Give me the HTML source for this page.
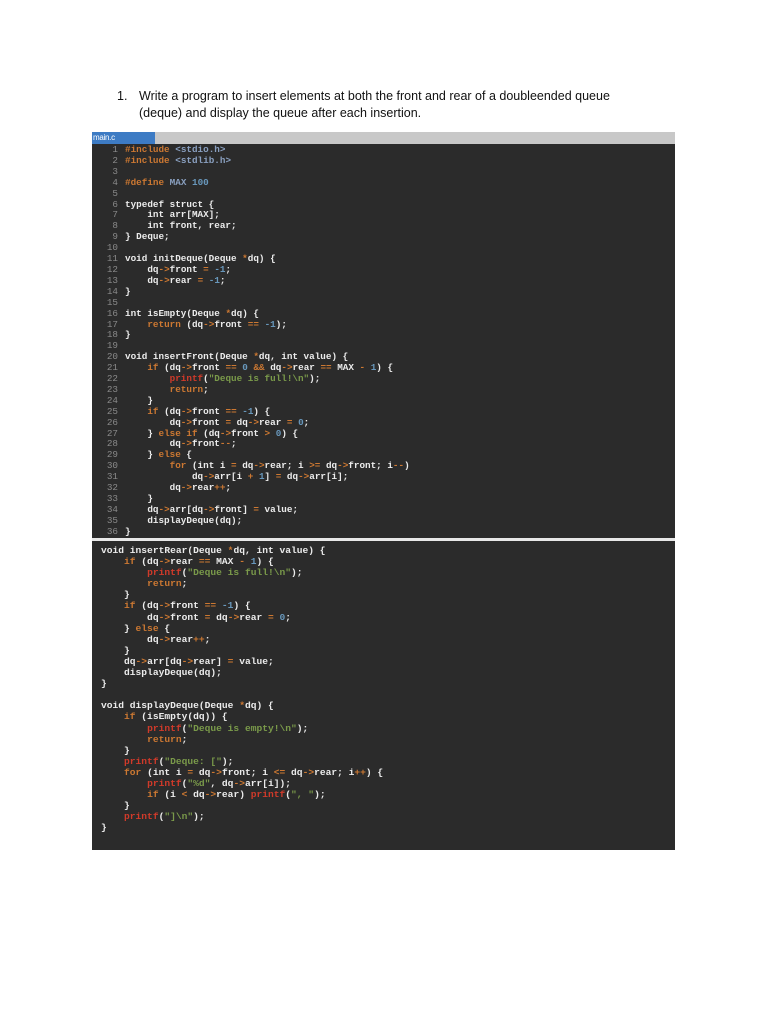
<!DOCTYPE html>
<html><head><style>
body{margin:0;width:768px;height:1024px;background:#fff;position:relative;font-family:"Liberation Sans",sans-serif;overflow:hidden}
.q{position:absolute;font-size:12.5px;color:#111;line-height:17px}
.box{position:absolute;left:92px;top:132px;width:583px;height:718px;background:#2b2b2b}
.hdr{position:absolute;left:0;top:0;width:583px;height:12px;background:#c8c8c8}
.tab{position:absolute;left:0;top:0;width:62px;height:12px;background:#3d7bc4;color:#fff;font-size:8px;line-height:12px;padding-left:1px;letter-spacing:-0.3px}
pre{margin:0;position:absolute;font-family:"Liberation Mono",monospace;font-size:9.3px;font-weight:bold;color:#ececec;white-space:pre}
.ln{color:#8a8a8a;text-align:right;font-weight:normal}
.k{color:#cc7832}.n{color:#6897bb}.s{color:#7a9a4a}.p{color:#d03a2a}.h{color:#8aa0c0}
.sep{position:absolute;left:0;top:406px;width:583px;height:3px;background:#e8e8e8}
</style></head><body>
<div class="q" style="left:117px;top:88px">1.</div>
<div class="q" style="left:139px;top:88px">Write a program to insert elements at both the front and rear of a doubleended queue<br>(deque) and display the queue after each insertion.</div>
<div class="box">
<div class="hdr"><div class="tab">main.c</div></div>
<pre class="ln" style="left:2px;top:13px;width:24px;line-height:10.9px">1
2
3
4
5
6
7
8
9
10
11
12
13
14
15
16
17
18
19
20
21
22
23
24
25
26
27
28
29
30
31
32
33
34
35
36</pre>
<pre style="left:33px;top:13px;line-height:10.9px"><span class="k">#include</span> <span class="h">&lt;stdio.h&gt;</span>
<span class="k">#include</span> <span class="h">&lt;stdlib.h&gt;</span>

<span class="k">#define</span> <span class="h">MAX</span> <span class="n">100</span>

typedef struct {
    int arr[MAX];
    int front, rear;
} Deque;

void initDeque(Deque <span class="k">*</span>dq) {
    dq<span class="k">-&gt;</span>front <span class="k">=</span> <span class="n">-1</span>;
    dq<span class="k">-&gt;</span>rear <span class="k">=</span> <span class="n">-1</span>;
}

int isEmpty(Deque <span class="k">*</span>dq) {
    <span class="k">return</span> (dq<span class="k">-&gt;</span>front <span class="k">==</span> <span class="n">-1</span>);
}

void insertFront(Deque <span class="k">*</span>dq, int value) {
    <span class="k">if</span> (dq<span class="k">-&gt;</span>front <span class="k">==</span> <span class="n">0</span> <span class="k">&amp;&amp;</span> dq<span class="k">-&gt;</span>rear <span class="k">==</span> MAX <span class="k">-</span> <span class="n">1</span>) {
        <span class="p">printf</span>(<span class="s">"Deque is full!\n"</span>);
        <span class="k">return</span>;
    }
    <span class="k">if</span> (dq<span class="k">-&gt;</span>front <span class="k">==</span> <span class="n">-1</span>) {
        dq<span class="k">-&gt;</span>front <span class="k">=</span> dq<span class="k">-&gt;</span>rear <span class="k">=</span> <span class="n">0</span>;
    } <span class="k">else if</span> (dq<span class="k">-&gt;</span>front <span class="k">&gt;</span> <span class="n">0</span>) {
        dq<span class="k">-&gt;</span>front<span class="k">--</span>;
    } <span class="k">else</span> {
        <span class="k">for</span> (int i <span class="k">=</span> dq<span class="k">-&gt;</span>rear; i <span class="k">&gt;=</span> dq<span class="k">-&gt;</span>front; i<span class="k">--</span>)
            dq<span class="k">-&gt;</span>arr[i <span class="k">+</span> <span class="n">1</span>] <span class="k">=</span> dq<span class="k">-&gt;</span>arr[i];
        dq<span class="k">-&gt;</span>rear<span class="k">++</span>;
    }
    dq<span class="k">-&gt;</span>arr[dq<span class="k">-&gt;</span>front] <span class="k">=</span> value;
    displayDeque(dq);
}</pre>
<div class="sep"></div>
<pre style="left:9px;top:413px;line-height:11.1px;font-size:9.6px">void insertRear(Deque <span class="k">*</span>dq, int value) {
    <span class="k">if</span> (dq<span class="k">-&gt;</span>rear <span class="k">==</span> MAX <span class="k">-</span> <span class="n">1</span>) {
        <span class="p">printf</span>(<span class="s">"Deque is full!\n"</span>);
        <span class="k">return</span>;
    }
    <span class="k">if</span> (dq<span class="k">-&gt;</span>front <span class="k">==</span> <span class="n">-1</span>) {
        dq<span class="k">-&gt;</span>front <span class="k">=</span> dq<span class="k">-&gt;</span>rear <span class="k">=</span> <span class="n">0</span>;
    } <span class="k">else</span> {
        dq<span class="k">-&gt;</span>rear<span class="k">++</span>;
    }
    dq<span class="k">-&gt;</span>arr[dq<span class="k">-&gt;</span>rear] <span class="k">=</span> value;
    displayDeque(dq);
}

void displayDeque(Deque <span class="k">*</span>dq) {
    <span class="k">if</span> (isEmpty(dq)) {
        <span class="p">printf</span>(<span class="s">"Deque is empty!\n"</span>);
        <span class="k">return</span>;
    }
    <span class="p">printf</span>(<span class="s">"Deque: ["</span>);
    <span class="k">for</span> (int i <span class="k">=</span> dq<span class="k">-&gt;</span>front; i <span class="k">&lt;=</span> dq<span class="k">-&gt;</span>rear; i<span class="k">++</span>) {
        <span class="p">printf</span>(<span class="s">"%d"</span>, dq<span class="k">-&gt;</span>arr[i]);
        <span class="k">if</span> (i <span class="k">&lt;</span> dq<span class="k">-&gt;</span>rear) <span class="p">printf</span>(<span class="s">", "</span>);
    }
    <span class="p">printf</span>(<span class="s">"]\n"</span>);
}</pre>
</div>
</body></html>
